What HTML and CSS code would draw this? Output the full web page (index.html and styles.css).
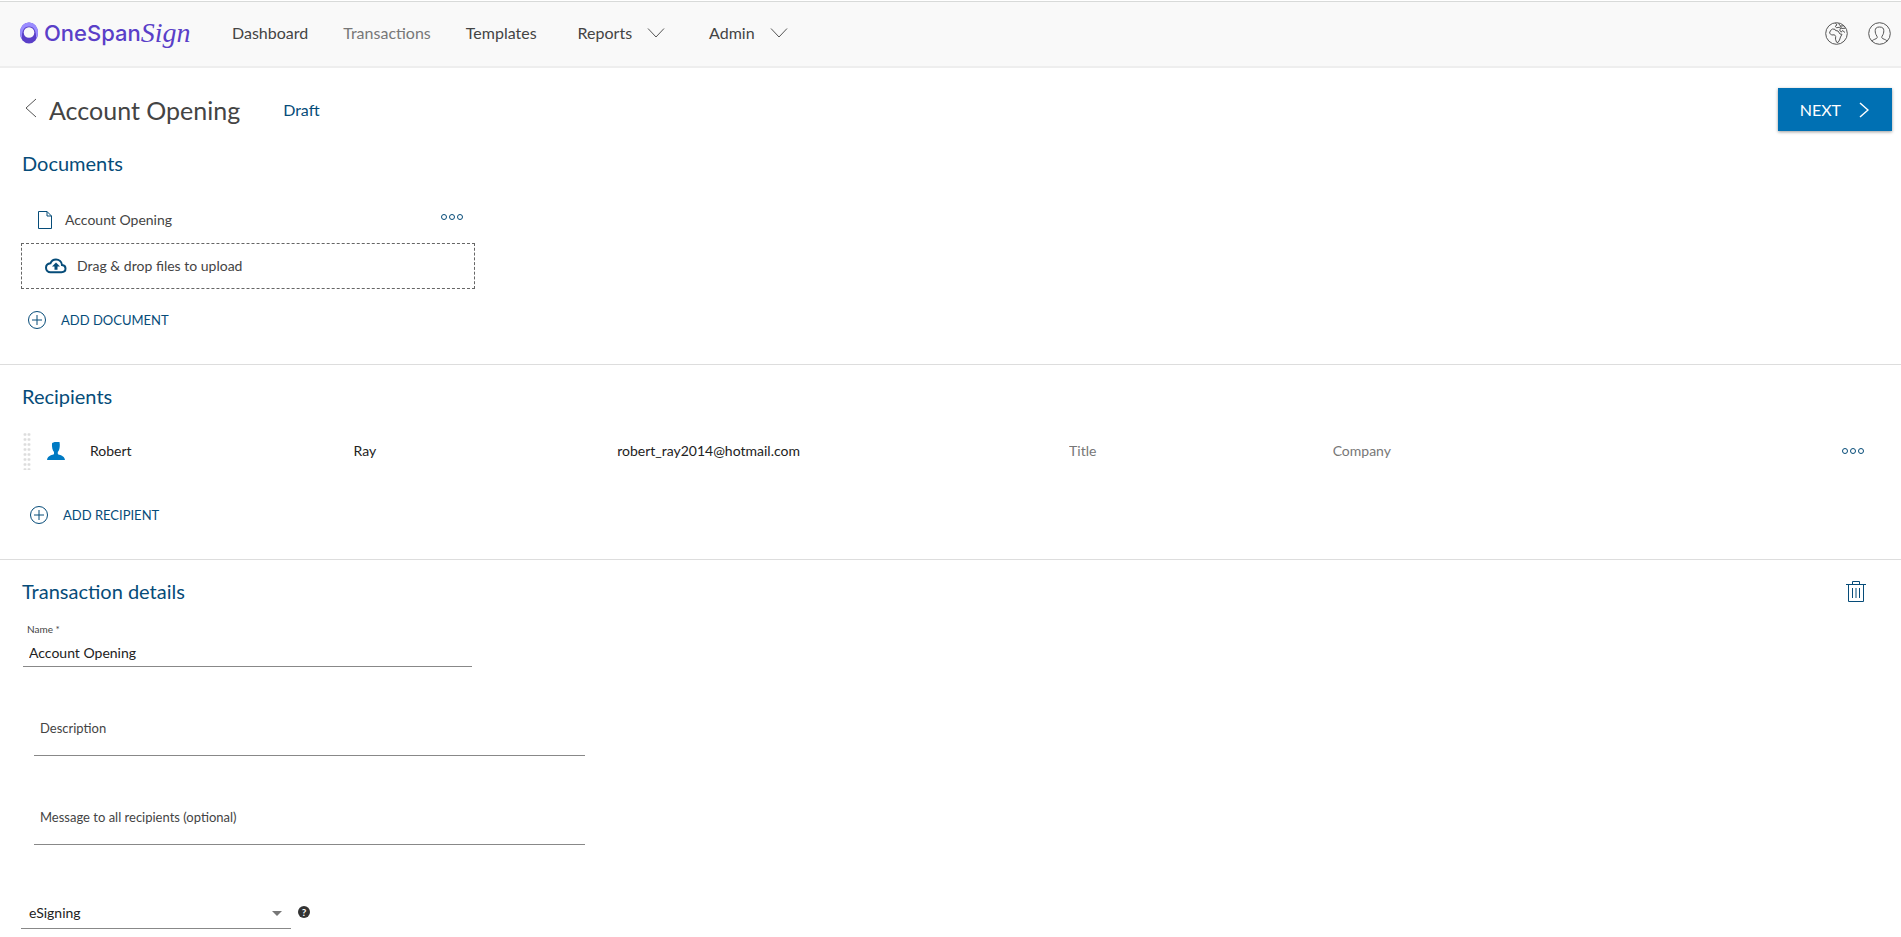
FILE: index.html
```html
<!DOCTYPE html>
<html lang="en">
<head>
	<meta charset="UTF-8">
	<title>Account Opening - OneSpan Sign</title>
	<link rel="stylesheet" href="styles.css">
</head>
<body>
	<header class="topbar">
		<a href="#" class="logo">
			<svg width="18" height="22" viewBox="0 0 18 22">
				<ellipse cx="9" cy="11" rx="9" ry="10.5" fill="#5a3fc8"/>
				<path d="M9 .5C4 .5 0 4.500 0 10.500c0 2.500.8 4.500 2 6C1.500 9 4 4.500 9 4.500s7.500 4.500 7 12c1.200-1.500 2-3.500 2-6C18 4.500 14 .5 9 .5z" fill="#9a8cff"/>
				<circle cx="9" cy="10.500" r="5.300" fill="#f9f9f9"/>
			</svg>
			<span class="logo-name">OneSpan</span><span class="logo-sign">Sign</span>
		</a>
		<nav class="nav">
			<a href="#">Dashboard</a>
			<a href="#" class="current">Transactions</a>
			<a href="#">Templates</a>
			<button type="button" class="nav-menu">Reports
				<svg width="18" height="10" viewBox="0 0 18 10"><path d="M1 .5l8 8.500 8-8.500"/></svg>
			</button>
			<button type="button" class="nav-menu">Admin
				<svg width="18" height="10" viewBox="0 0 18 10"><path d="M1 .5l8 8.500 8-8.500"/></svg>
			</button>
		</nav>
		<div class="tools">
			<button type="button" aria-label="Language">
				<svg width="23" height="23" viewBox="0 0 23 23">
					<circle cx="11.500" cy="11.500" r="10.800"/>
					<path d="M4.500 11l1-2.500 2-1.500 2.500.3.500 1.200 2.500.5 2 3 2 .3-1.500 2.700-1 3-1.500 2.500-1.500-.3-1-3 .2-2.700-1.200-1.700-3 .2z"/>
					<path d="M10.500 1l1.500 2-1.800 1.200 1.300 1.600 3-.6 1.200 1.800-1.200.8 1.800 2.400 1.200-1.700 2.500 2M13.500 1.500l2 2.500 3.500-.2M15.500 4l1 2.500 4-.3"/>
				</svg>
			</button>
			<button type="button" aria-label="Account">
				<svg width="23" height="23" viewBox="0 0 23 23">
					<circle cx="11.500" cy="11.500" r="10.800"/>
					<path d="M4 19.200c.5-1.400 2-1.500 4.500-2.700.9-.5.900-1.500.3-2.500C7.500 12 7.200 10.500 7.200 8.700 7.200 6.300 8.500 5 11.500 5s4.300 1.300 4.300 3.700c0 1.800-.3 3.300-1.600 5.300-.6 1-.6 2 .3 2.500 2.500 1.200 4 1.300 4.500 2.700"/>
				</svg>
			</button>
		</div>
	</header>

	<main>
		<div class="titlebar">
			<a href="#" class="back" aria-label="Back">
				<svg width="12" height="20" viewBox="0 0 12 20"><path d="M11 1L1 10l10 9"/></svg>
			</a>
			<h1>Account Opening</h1>
			<span class="status">Draft</span>
			<button type="button" class="next">NEXT
				<svg width="10" height="16" viewBox="0 0 10 16"><path d="M1 1l8 7-8 7"/></svg>
			</button>
		</div>

		<!-- documents -->
		<section class="documents">
			<h2>Documents</h2>
			<div class="doc">
				<svg width="14" height="18" viewBox="0 0 14 18"><path d="M.5.500h8.500l4.500 4.500v12.500H.5zM9 .500v4.500h4.500"/></svg>
				<span>Account Opening</span>
				<button type="button" class="more" aria-label="Document options">
					<svg width="24" height="8" viewBox="0 0 24 8"><circle cx="4" cy="4" r="2.500"/><circle cx="12" cy="4" r="2.500"/><circle cx="20" cy="4" r="2.500"/></svg>
				</button>
			</div>
			<div class="dropzone">
				<svg width="22" height="16" viewBox="0 0 22 16">
					<path d="M5.500 14.200h11c2.300 0 4-1.500 4-3.600 0-2-1.500-3.400-3.500-3.600C16.700 3.700 14 1.500 11 1.500c-2.500 0-4.600 1.400-5.500 3.700C2.800 5.500 1 7.300 1 9.800c0 2.500 2 4.400 4.500 4.400z" fill="none" stroke="#064c79" stroke-width="2"/>
					<path d="M11 4.500l4 4h-2.500v3.300h-3V8.500H7z" fill="#064c79"/>
				</svg>
				<span>Drag &amp; drop files to upload</span>
			</div>
			<button type="button" class="add">
				<svg width="18" height="18" viewBox="0 0 18 18"><circle cx="9" cy="9" r="8.500"/><path d="M4 9h10M9 4v10"/></svg>
				ADD DOCUMENT
			</button>
		</section>

		<!-- recipients -->
		<section class="recipients">
			<h2>Recipients</h2>
			<div class="recipient">
				<span class="grip"></span>
				<svg class="person" width="20" height="18" viewBox="0 0 20 18">
					<path d="M6 1.500C6.500.5 8 0 10 0h3.500l.3 2.500c.1 3.200-.6 6-2 7.500v2c1 1.200 6.500 1 7.200 6H1c.7-5 6-4.800 7-6v-2C6.500 8.500 5.700 5 6 1.500z" fill="#007ac3"/>
				</svg>
				<div class="fields">
					<input type="text" aria-label="First name" value="Robert">
					<input type="text" aria-label="Last name" value="Ray">
					<input type="text" aria-label="Email" value="robert_ray2014@hotmail.com">
					<input type="text" aria-label="Title" placeholder="Title">
					<input type="text" aria-label="Company" placeholder="Company">
				</div>
				<button type="button" class="more" aria-label="Recipient options">
					<svg width="24" height="8" viewBox="0 0 24 8"><circle cx="4" cy="4" r="2.500"/><circle cx="12" cy="4" r="2.500"/><circle cx="20" cy="4" r="2.500"/></svg>
				</button>
			</div>
			<button type="button" class="add">
				<svg width="18" height="18" viewBox="0 0 18 18"><circle cx="9" cy="9" r="8.500"/><path d="M4 9h10M9 4v10"/></svg>
				ADD RECIPIENT
			</button>
		</section>

		<!-- details -->
		<section class="details">
			<div class="details-head">
				<h2>Transaction details</h2>
				<button type="button" class="trash" aria-label="Delete">
					<svg width="22" height="23" viewBox="0 0 22 23"><path d="M1 4.500h20M3.500 4.500v17h15v-17M7.500 4V1.500h7V4M7.500 8v10M11 8v10M14.500 8v10"/></svg>
				</button>
			</div>
			<div class="name">
				<label for="name">Name *</label>
				<input type="text" id="name" value="Account Opening">
			</div>
			<input type="text" class="wide" aria-label="Description" placeholder="Description">
			<input type="text" class="wide" aria-label="Message to all recipients" placeholder="Message to all recipients (optional)">
			<div class="type">
				<div class="select">
					<select aria-label="Transaction type">
						<option>eSigning</option>
					</select>
				</div>
				<button type="button" class="help" aria-label="Help">?</button>
			</div>
		</section>
	</main>
</body>
</html>
```
FILE: styles.css
```css
*{
	margin: 0;
	padding: 0;
	box-sizing: border-box;
}
body{
	background-color: #fff;
	color: #444;
	font-family: Lato, "Liberation Sans", sans-serif;
	font-size: 14px;
	line-height: 20px;
}
a{
	color: inherit;
	text-decoration: none;
}
button{
	border: 0;
	background: none;
	color: inherit;
	font: inherit;
	cursor: pointer;
}
input,
select{
	border: 0;
	border-radius: 0;
	background: none;
	color: #222;
	font: inherit;
	outline: none;
}
svg{
	display: block;
	flex: none;
	fill: none;
	stroke: #064c79;
}
h2{
	padding-left: 1px;
	color: #064c79;
	font-size: 20px;
	font-weight: 400;
	line-height: 24px;
}
/*topbar*/
.topbar{
	display: flex;
	align-items: center;
	height: 67px;
	margin-top: 1px;
	padding: 0 10px 2px 20px;
	border-top: 1px solid #d8dad9;
	border-bottom: 2px solid #eee;
	background-color: #f9f9f9;
}
.logo{
	display: flex;
	align-items: center;
	width: 212px;
	color: #5a3fc8;
	font-family: Inter, sans-serif;
	font-size: 22px;
	font-weight: 500;
}
.logo svg{
	margin-right: 6px;
	stroke: none;
}
.logo-sign{
	font-family: "Liberation Serif", serif;
	font-size: 28px;
	font-style: italic;
}
.nav{
	display: flex;
	align-items: center;
	gap: 35px;
	font-size: 16px;
}
.nav .current{
	color: #777;
}
.nav-menu{
	display: flex;
	align-items: center;
	gap: 15px;
	margin: 0 3px 0 6px;
}
.nav svg,
.tools svg,
.back svg{
	stroke: #555;
}
.tools{
	display: flex;
	gap: 20px;
	margin-left: auto;
}
/*titlebar*/
.titlebar{
	display: flex;
	align-items: center;
	padding: 20px 9px 20px 25px;
}
.titlebar h1{
	margin: 0 43px 0 12px;
	font-size: 25px;
	font-weight: 400;
	line-height: 32px;
}
.back{
	padding-bottom: 4px;
}
.status{
	color: #064c79;
	font-size: 16px;
}
.next{
	display: flex;
	align-items: center;
	gap: 18px;
	height: 43px;
	margin-left: auto;
	padding: 0 23px 0 22px;
	background-color: #0070b3;
	color: #fff;
	font-size: 16px;
	box-shadow: 0 1px 3px rgba(0,0,0,.4);
}
.next svg{
	stroke: #fff;
	stroke-width: 1.5;
}
section{
	padding-left: 21px;
}
/*documents*/
.documents{
	padding-bottom: 34px;
	border-bottom: 1px solid #ddd;
}
.doc,
.dropzone{
	display: flex;
	align-items: center;
	width: 454px;
}
.doc{
	gap: 13px;
	margin-top: 35px;
	padding: 0 11px 0 17px;
}
.more{
	margin-left: auto;
}
.doc .more{
	padding-bottom: 6px;
}
.dropzone{
	gap: 10px;
	height: 46px;
	margin: 13px 0 21px;
	padding-left: 23px;
	border: 1px dashed #666;
}
.dropzone svg{
	stroke: none;
}
.add{
	display: flex;
	align-items: center;
	gap: 15px;
	padding: 0 7px;
	color: #064c79;
	font-size: 13px;
}
/*recipients*/
.recipients{
	padding-top: 19px;
	padding-bottom: 34px;
	border-bottom: 1px solid #ddd;
}
.recipients .add{
	padding-left: 9px;
}
.recipient{
	display: flex;
	align-items: center;
	margin: 24px 36px 35px 2px;
}
.grip{
	width: 8px;
	height: 38px;
	background-image: radial-gradient(circle, #ddd 1px, #e2e2e2 1px, #fff 2px);
	background-size: 4px 5px;
}
.person{
	margin: 0 24px 0 15px;
	stroke: none;
}
.fields{
	display: grid;
	flex: 1;
	grid-template-columns: 14fr 14fr 24fr 14fr 27fr;
}
.fields input{
	min-width: 0;
}
input::placeholder{
	color: #777;
	opacity: 1;
}
/*details*/
.details{
	padding-top: 19px;
}
.details-head{
	display: flex;
	align-items: center;
	justify-content: space-between;
	padding-right: 34px;
}
.name{
	display: flex;
	flex-direction: column;
	width: 449px;
	margin: 20px 0 0 2px;
}
.name label{
	padding-left: 4px;
	font-size: 10px;
	line-height: 12px;
}
.name input{
	height: 32px;
	padding: 3px 6px 0;
	border-bottom: 1px solid #888;
}
.wide{
	display: block;
	width: 551px;
	height: 53px;
	margin: 36px 0 0 13px;
	padding: 0 6px 2px;
	border-bottom: 1px solid #888;
	font-size: 13px;
}
.wide::placeholder{
	color: #444;
}
.type{
	display: flex;
	align-items: center;
	gap: 7px;
	margin-top: 53px;
}
.select{
	position: relative;
	width: 270px;
}
.select::after{
	content: "";
	position: absolute;
	top: 13px;
	right: 9px;
	border: 5px solid transparent;
	border-top-color: #777;
	border-bottom: 0;
}
.select select{
	width: 100%;
	height: 31px;
	padding-left: 8px;
	border-bottom: 1px solid #888;
	appearance: none;
}
.help{
	width: 12px;
	height: 12px;
	margin-bottom: 4px;
	border-radius: 50%;
	background-color: #333;
	color: #fff;
	font-size: 10px;
	font-weight: 700;
	line-height: 12px;
}
```
